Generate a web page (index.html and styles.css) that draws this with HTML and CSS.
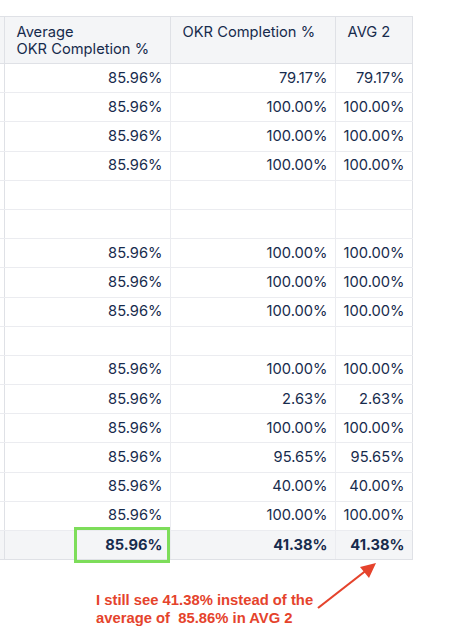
FILE: index.html
```html
<!DOCTYPE html>
<html>
<head>
<meta charset="utf-8">
<link rel="stylesheet" href="styles.css">
</head>
<body>
<div class="page">
  <table class="grid">
    <colgroup>
      <col class="c0"><col class="c1"><col class="c2"><col class="c3">
    </colgroup>
    <thead>
      <tr>
        <th class="stub"></th>
        <th>Average<br>OKR Completion %</th>
        <th>OKR Completion %</th>
        <th>AVG 2</th>
      </tr>
    </thead>
    <tbody>
      <tr><td class="stub"></td><td>85.96%</td><td>79.17%</td><td>79.17%</td></tr>
      <tr><td class="stub"></td><td>85.96%</td><td>100.00%</td><td>100.00%</td></tr>
      <tr><td class="stub"></td><td>85.96%</td><td>100.00%</td><td>100.00%</td></tr>
      <tr><td class="stub"></td><td>85.96%</td><td>100.00%</td><td>100.00%</td></tr>
      <tr><td class="stub"></td><td></td><td></td><td></td></tr>
      <tr><td class="stub"></td><td></td><td></td><td></td></tr>
      <tr><td class="stub"></td><td>85.96%</td><td>100.00%</td><td>100.00%</td></tr>
      <tr><td class="stub"></td><td>85.96%</td><td>100.00%</td><td>100.00%</td></tr>
      <tr><td class="stub"></td><td>85.96%</td><td>100.00%</td><td>100.00%</td></tr>
      <tr><td class="stub"></td><td></td><td></td><td></td></tr>
      <tr><td class="stub"></td><td>85.96%</td><td>100.00%</td><td>100.00%</td></tr>
      <tr><td class="stub"></td><td>85.96%</td><td>2.63%</td><td>2.63%</td></tr>
      <tr><td class="stub"></td><td>85.96%</td><td>100.00%</td><td>100.00%</td></tr>
      <tr><td class="stub"></td><td>85.96%</td><td>95.65%</td><td>95.65%</td></tr>
      <tr><td class="stub"></td><td>85.96%</td><td>40.00%</td><td>40.00%</td></tr>
      <tr><td class="stub"></td><td>85.96%</td><td>100.00%</td><td>100.00%</td></tr>
      <tr class="total"><td class="stub"></td><td class="hl">85.96%<span class="box"></span></td><td>41.38%</td><td>41.38%</td></tr>
    </tbody>
  </table>
  <p class="note">I still see 41.38% instead of the<br>average of&nbsp; 85.86% in AVG 2</p>
  <svg class="arrow" width="474" height="640" viewBox="0 0 474 640">
    <line x1="318" y1="608" x2="368" y2="569" stroke="#e5432c" stroke-width="2.2"/>
    <polygon points="376,563 360,567 369,578" fill="#e5432c"/>
  </svg>
</div>
</body>
</html>
```
FILE: styles.css
```css
html, body {
  margin: 0;
  padding: 0;
  background: #ffffff;
}
.page {
  position: relative;
  width: 474px;
  height: 640px;
  padding-top: 16px;
  box-sizing: border-box;
  font-family: Inter, "Liberation Sans", sans-serif;
  color: #172b4d;
}
.grid {
  border-collapse: collapse;
  table-layout: fixed;
  width: 412px;
  font-size: 14.7px;
}
.c0 { width: 4px; }
.c1 { width: 166px; }
.c2 { width: 165px; }
.c3 { width: 77px; }
.grid th {
  background: #f4f5f7;
  font-weight: 400;
  text-align: left;
  vertical-align: top;
  height: 47px;
  box-sizing: border-box;
  padding: 7px 4px 0 12px;
  line-height: 17px;
  border-top: 1px solid #dfe1e6;
  border-bottom: 1px solid #dfe1e6;
  border-right: 1px solid #dfe1e6;
  white-space: nowrap;
}
.grid td {
  height: 29.2px;
  box-sizing: border-box;
  padding: 0 7px 0 4px;
  text-align: right;
  border-bottom: 1px solid #ebecf0;
  border-right: 1px solid #ebecf0;
  white-space: nowrap;
  line-height: 17px;
}
.grid th.stub, .grid td.stub {
  padding: 0;
  border-right: 1px solid #dfe1e6;
}
.grid tr.total td {
  background: #f4f5f7;
  font-weight: 700;
  border-bottom: 1px solid #dfe1e6;
}
.grid td:last-child, .grid th:last-child {
  border-right: 1px solid #dfe1e6;
}
.hl {
  position: relative;
}
.box {
  position: absolute;
  left: 69px;
  top: -4px;
  width: 96px;
  height: 36px;
  border: 3px solid #7ddd5a;
  box-sizing: border-box;
}
.note {
  margin: 31px 0 0 96px;
  font-family: "Liberation Sans", Arial, sans-serif;
  font-weight: 700;
  font-size: 14.8px;
  line-height: 18px;
  color: #e5432c;
}
.arrow {
  position: absolute;
  left: 0;
  top: 0;
  pointer-events: none;
}
```
